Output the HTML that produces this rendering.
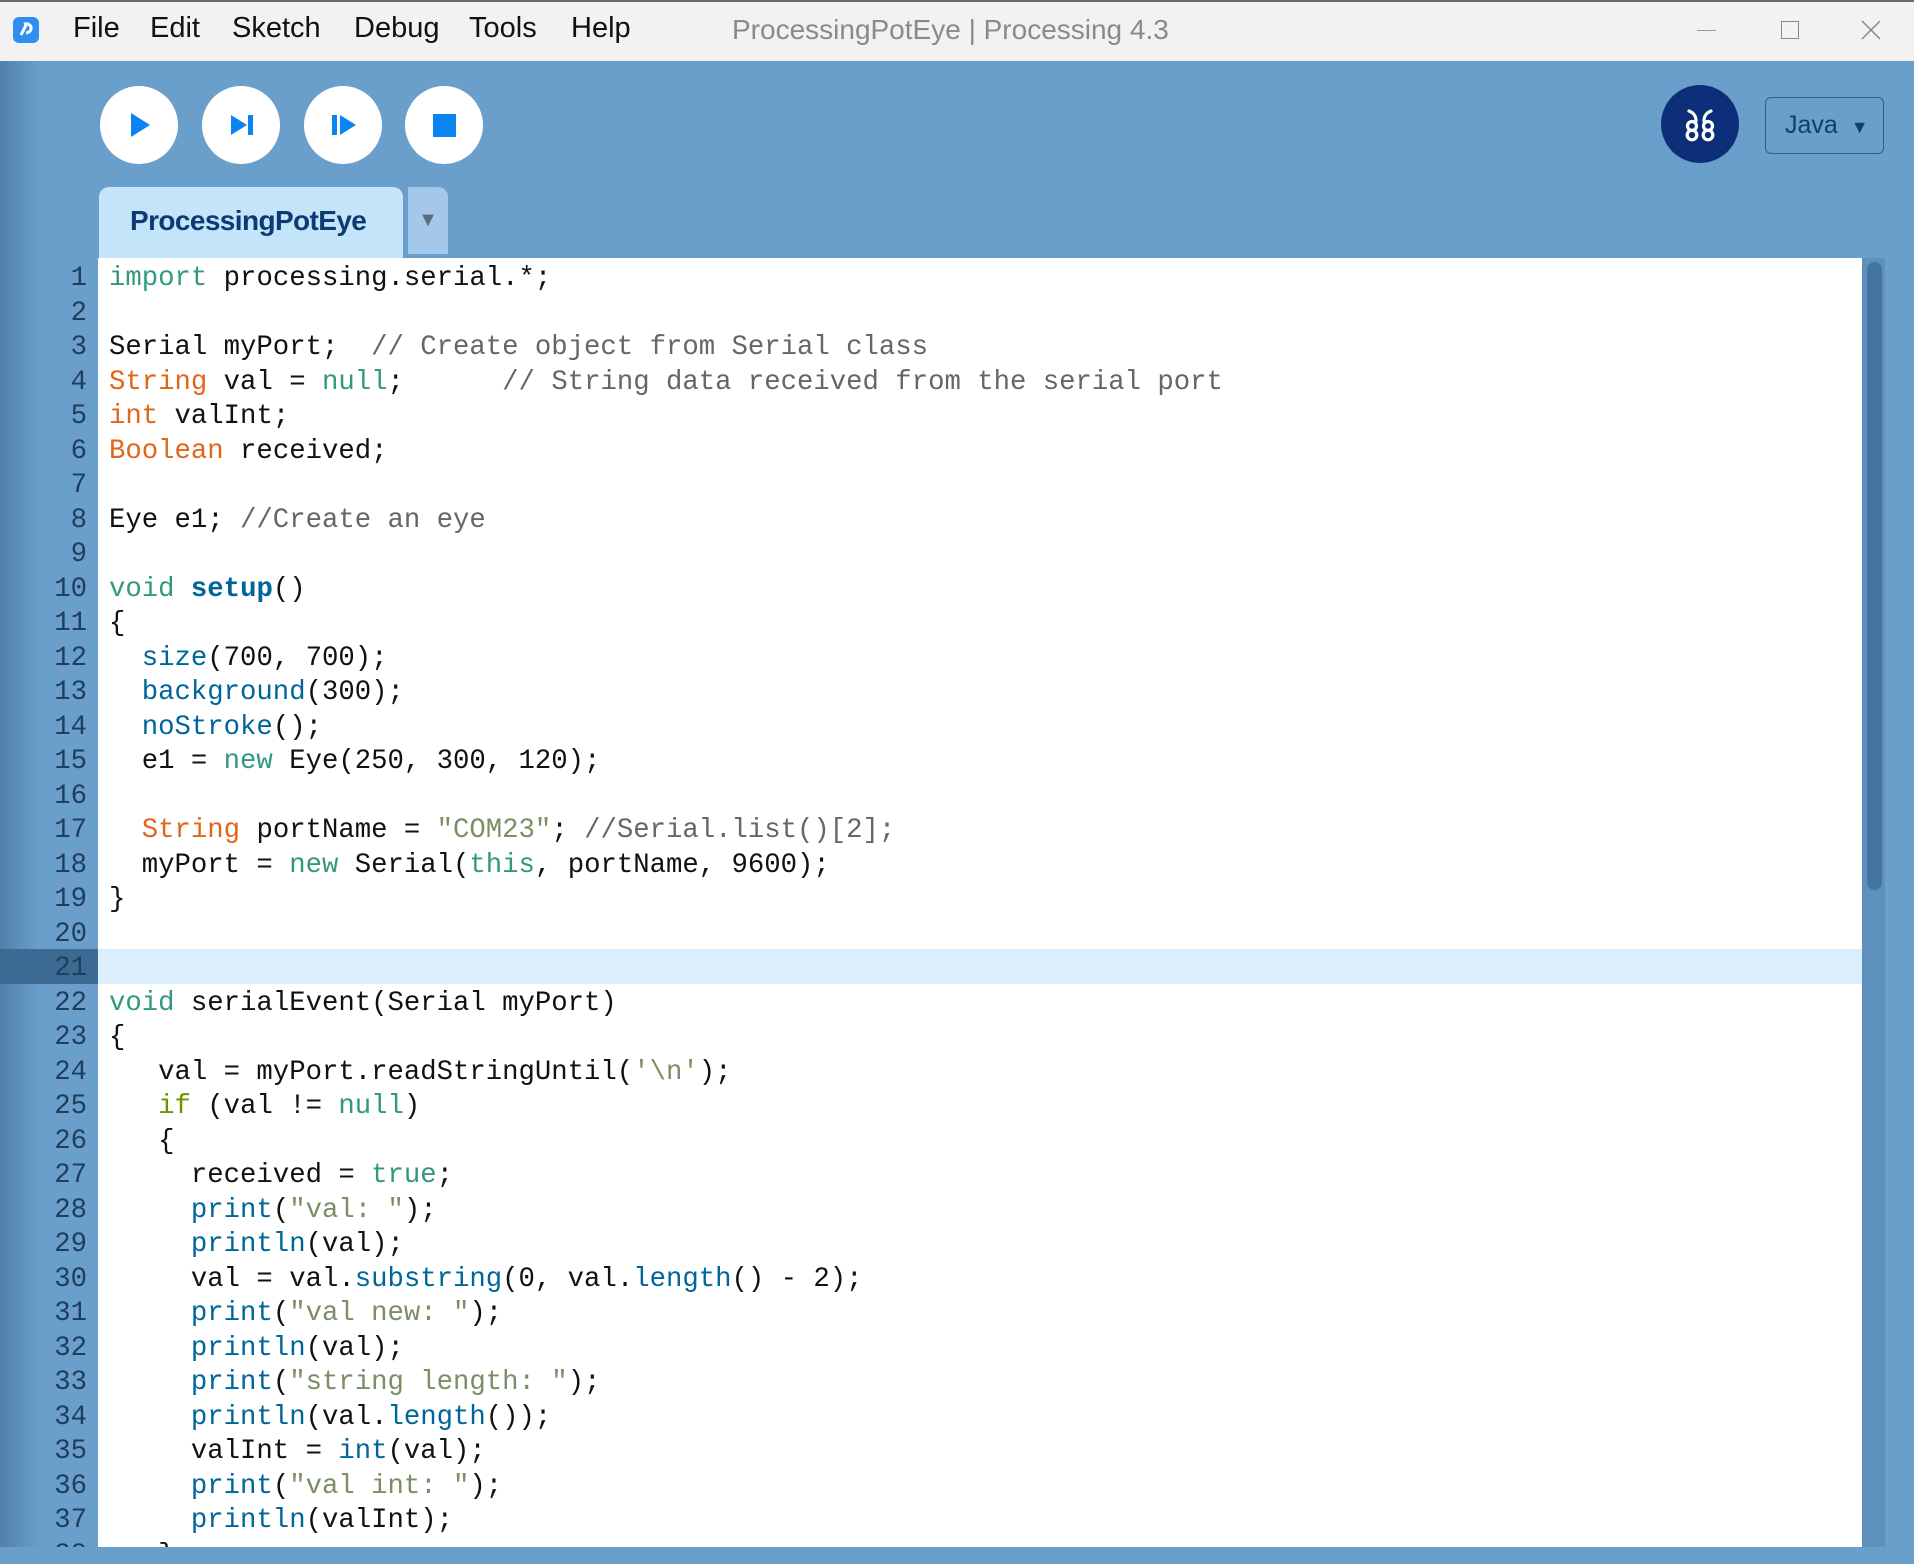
<!DOCTYPE html>
<html><head><meta charset="utf-8"><style>
*{margin:0;padding:0;box-sizing:border-box}
body{width:1914px;height:1564px;overflow:hidden;background:#6a9fcc;position:relative;font-family:"Liberation Sans",sans-serif}
.titlebar{position:absolute;left:0;top:0;width:1914px;height:61px;background:#f2f2f2;border-top:2px solid #6b6b6b}
.menu{position:absolute;top:10px;font-size:29px;color:#111}
.title{position:absolute;left:732px;top:12px;font-size:28px;color:#8a8a8a}
.edge{position:absolute;left:0;top:61px;width:40px;height:1503px;background:linear-gradient(to right,#4f80aa,#6a9fcc)}
.btn{position:absolute;top:86px;width:78px;height:78px;border-radius:50%;background:#fff}
.btn svg{position:absolute;left:0;top:0}
.tab{position:absolute;left:99px;top:187px;width:304px;height:71px;background:#c4e4fa;border-radius:10px 10px 0 0;font-size:28px;font-weight:bold;color:#0d3a73;padding:18px 0 0 31px;letter-spacing:-0.6px}
.tabdd{position:absolute;left:408px;top:187px;width:40px;height:67px;background:#a4c8ea;border-radius:0 10px 0 0;color:#5a6c80;font-size:20px;text-align:center;padding-top:22px}
.code{position:absolute;left:98px;top:258px;width:1764px;height:1289px;background:#fff;overflow:hidden}
.hl{position:absolute;left:98px;top:949px;width:1764px;height:34.5px;background:#dcefff}
.hlg{position:absolute;left:0;top:949px;width:98px;height:34.5px;background:#3b6b93}
.gut{position:absolute;left:0;top:262px;width:87px;text-align:right;font-family:"Liberation Mono",monospace;font-size:27.3px;line-height:34.5px;color:#1f3d5c;height:1285px;overflow:hidden}
pre{position:absolute;left:109px;top:262px;font-family:"Liberation Mono",monospace;font-size:27.3px;line-height:34.5px;color:#111;height:1285px;overflow:hidden}
.k{color:#33997e}.t{color:#e2661a}.f{color:#006699}.c{color:#666}.s{color:#7a8f66}.i{color:#669900}.b{color:#006699;font-weight:bold}
.track{position:absolute;left:1862px;top:258px;width:23px;height:1289px;background:#5e90bd}
.thumb{position:absolute;left:1867px;top:262px;width:15px;height:628px;border-radius:8px;background:#44759f}
.bottom{position:absolute;left:0;top:1547px;width:1914px;height:17px;background:#6a9fcc}
</style></head><body>
<div class="titlebar">
<svg style="position:absolute;left:12px;top:14px" width="28" height="28" viewBox="0 0 28 28"><rect x="1" y="1" width="26" height="26" rx="6" fill="#2f8ef0"/><path d="M9 19 L14 9 M12 8 C20 6 22 16 14 17" stroke="#fff" stroke-width="3" fill="none"/></svg>
<span class="menu" style="left:73px">File</span>
<span class="menu" style="left:150px">Edit</span>
<span class="menu" style="left:232px">Sketch</span>
<span class="menu" style="left:354px">Debug</span>
<span class="menu" style="left:469px">Tools</span>
<span class="menu" style="left:571px">Help</span>
<span class="title">ProcessingPotEye | Processing 4.3</span>
<div style="position:absolute;left:1697px;top:28px;width:19px;height:1px;background:#999"></div>
<div style="position:absolute;left:1781px;top:19px;width:18px;height:18px;border:1.5px solid #888"></div>
<svg style="position:absolute;left:1861px;top:18px" width="20" height="20"><path d="M1 1L19 19M19 1L1 19" stroke="#888" stroke-width="1.5"/></svg>
</div>
<div class="edge"></div>
<div class="btn" style="left:100px"><svg width="78" height="78"><path d="M31 27 L31 51 L50 39Z" fill="#0a84f0"/></svg></div>
<div class="btn" style="left:202px"><svg width="78" height="78"><path d="M29 29 L29 49 L45 39Z" fill="#0a84f0"/><rect x="46" y="29" width="5" height="20" fill="#0a84f0"/></svg></div>
<div class="btn" style="left:304px"><svg width="78" height="78"><rect x="28" y="29" width="5" height="20" fill="#0a84f0"/><path d="M36 29 L36 49 L52 39Z" fill="#0a84f0"/></svg></div>
<div class="btn" style="left:405px"><svg width="78" height="78"><rect x="28" y="28" width="23" height="23" fill="#0a84f0"/></svg></div>
<div style="position:absolute;left:1661px;top:85px;width:78px;height:78px;border-radius:50%;background:#0d2f7a">
<svg width="78" height="78" viewBox="0 0 78 78"><g stroke="#fff" stroke-width="3.2" fill="none" stroke-linecap="round"><path d="M28 26 C33 28 35 31 35 36"/><circle cx="31" cy="41" r="4.5"/><circle cx="31" cy="50" r="4.8"/><path d="M50 26 C45 28 43 31 43 36"/><circle cx="47" cy="41" r="4.5"/><circle cx="47" cy="50" r="4.8"/></g></svg></div>
<div style="position:absolute;left:1765px;top:97px;width:119px;height:57px;border:1.5px solid #2d5f8c;border-radius:6px;color:#123e66;font-size:25px;padding:13px 0 0 19px">Java <span style="font-size:18px;margin-left:6px">▼</span></div>
<div class="tab">ProcessingPotEye</div>
<div class="tabdd">▼</div>
<div class="code"></div>
<div class="hl"></div>
<div class="hlg"></div>
<div class="gut">1<br>2<br>3<br>4<br>5<br>6<br>7<br>8<br>9<br>10<br>11<br>12<br>13<br>14<br>15<br>16<br>17<br>18<br>19<br>20<br>21<br>22<br>23<br>24<br>25<br>26<br>27<br>28<br>29<br>30<br>31<br>32<br>33<br>34<br>35<br>36<br>37<br>38</div>
<pre><span class="k">import</span> processing.serial.*;

Serial myPort;  <span class="c">// Create object from Serial class</span>
<span class="t">String</span> val = <span class="k">null</span>;      <span class="c">// String data received from the serial port</span>
<span class="t">int</span> valInt;
<span class="t">Boolean</span> received;

Eye e1; <span class="c">//Create an eye</span>

<span class="k">void</span> <span class="b">setup</span>()
{
  <span class="f">size</span>(700, 700);
  <span class="f">background</span>(300);
  <span class="f">noStroke</span>();
  e1 = <span class="k">new</span> Eye(250, 300, 120);

  <span class="t">String</span> portName = <span class="s">"COM23"</span>; <span class="c">//Serial.list()[2];</span>
  myPort = <span class="k">new</span> Serial(<span class="k">this</span>, portName, 9600);
}


<span class="k">void</span> serialEvent(Serial myPort)
{
   val = myPort.readStringUntil(<span class="s">'\n'</span>);
   <span class="i">if</span> (val != <span class="k">null</span>)
   {
     received = <span class="k">true</span>;
     <span class="f">print</span>(<span class="s">"val: "</span>);
     <span class="f">println</span>(val);
     val = val.<span class="f">substring</span>(0, val.<span class="f">length</span>() - 2);
     <span class="f">print</span>(<span class="s">"val new: "</span>);
     <span class="f">println</span>(val);
     <span class="f">print</span>(<span class="s">"string length: "</span>);
     <span class="f">println</span>(val.<span class="f">length</span>());
     valInt = <span class="f">int</span>(val);
     <span class="f">print</span>(<span class="s">"val int: "</span>);
     <span class="f">println</span>(valInt);
   }</pre>
<div class="track"></div>
<div class="thumb"></div>
<div class="bottom"></div>
</body></html>
